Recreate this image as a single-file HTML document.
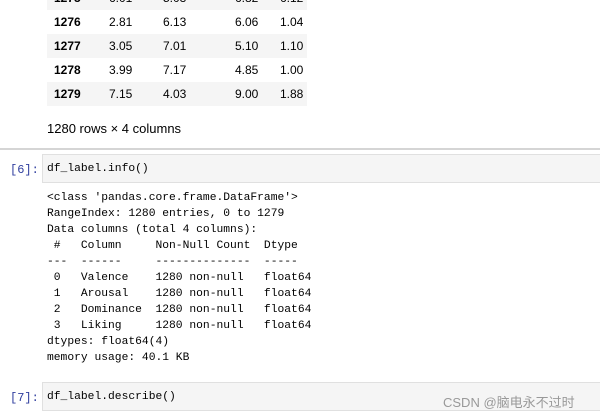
<html><head><style>
body{margin:0;width:600px;height:415px;overflow:hidden;background:#fff;position:relative;font-family:"Liberation Sans",sans-serif}
.r{position:absolute;left:47px;width:260px;height:24px;font-size:12px;color:#000}
.r span{position:absolute;top:5px}
.g{background:#f5f5f5}
.b{font-weight:bold;left:7px}
.mono{font-family:"Liberation Mono","Noto Sans CJK SC",monospace;font-size:11.3px}
.box{position:absolute;left:42px;right:-2px;background:#f5f5f5;border:1px solid #e0e0e0;height:27px}
.lab{position:absolute;left:10px;color:#303f9f;font-family:"Liberation Mono",monospace;font-size:12px}
pre{position:absolute;left:47px;top:190px;margin:0;line-height:16px;color:#000}
</style></head><body>
<div class="r g" style="top:-14px"><span class="b">1275</span><span style="left:62px">6.01</span><span style="left:116px">5.03</span><span style="left:188px">6.82</span><span style="left:233px">6.12</span></div>
<div class="r" style="top:10px"><span class="b">1276</span><span style="left:62px">2.81</span><span style="left:116px">6.13</span><span style="left:188px">6.06</span><span style="left:233px">1.04</span></div>
<div class="r g" style="top:34px"><span class="b">1277</span><span style="left:62px">3.05</span><span style="left:116px">7.01</span><span style="left:188px">5.10</span><span style="left:233px">1.10</span></div>
<div class="r" style="top:58px"><span class="b">1278</span><span style="left:62px">3.99</span><span style="left:116px">7.17</span><span style="left:188px">4.85</span><span style="left:233px">1.00</span></div>
<div class="r g" style="top:82px"><span class="b">1279</span><span style="left:62px">7.15</span><span style="left:116px">4.03</span><span style="left:188px">9.00</span><span style="left:233px">1.88</span></div>
<div style="position:absolute;left:47px;top:121px;font-size:13px">1280 rows × 4 columns</div>
<div style="position:absolute;left:0;right:0;top:148px;height:2px;background:#d5d5d5"></div>
<div class="lab" style="top:163px">[6]:</div>
<div class="box" style="top:154px"><div class="mono" style="position:absolute;left:4px;top:8px">df_label.info()</div></div>
<pre class="mono">&lt;class 'pandas.core.frame.DataFrame'&gt;
RangeIndex: 1280 entries, 0 to 1279
Data columns (total 4 columns):
 #   Column     Non-Null Count  Dtype  
---  ------     --------------  -----  
 0   Valence    1280 non-null   float64
 1   Arousal    1280 non-null   float64
 2   Dominance  1280 non-null   float64
 3   Liking     1280 non-null   float64
dtypes: float64(4)
memory usage: 40.1 KB</pre>
<div class="lab" style="top:391px">[7]:</div>
<div class="box" style="top:382px"><div class="mono" style="position:absolute;left:4px;top:8px">df_label.describe()</div></div>
<div style="position:absolute;left:443px;top:392px;font-size:13px;color:#999;font-family:'Liberation Sans','Noto Sans CJK SC',sans-serif">CSDN @脑电永不过时</div>
</body></html>
